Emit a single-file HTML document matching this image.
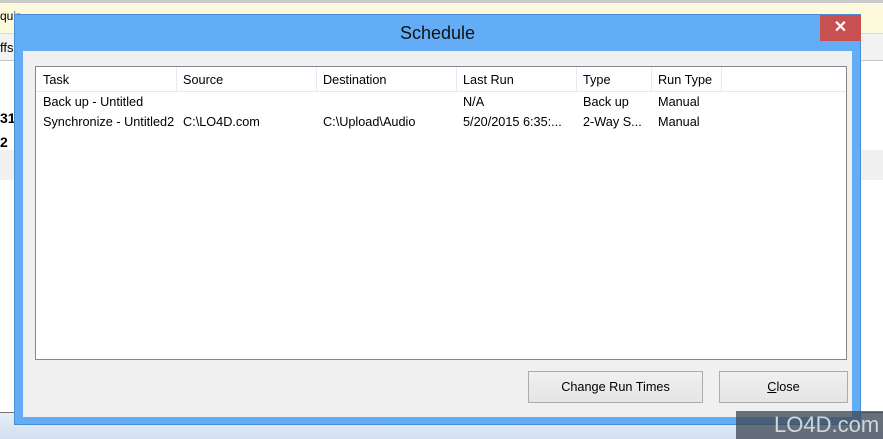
<!DOCTYPE html><html><head><style>
body{margin:0;width:883px;height:439px;position:relative;overflow:hidden;background:#fff;font-family:"Liberation Sans",sans-serif;font-size:12.7px;}
.a{position:absolute}
</style></head><body>
<div class="a" style="left:0;top:0;width:883px;height:3px;background:#c9c9c9"></div>
<div class="a" style="left:0;top:3px;width:883px;height:30px;background:#fdf9dc;border-bottom:1px solid #e3dcb0"></div>
<div class="a" style="left:0;top:9px;font-size:12px;color:#000">quir</div>
<div class="a" style="left:0;top:34px;width:883px;height:26px;background:#f2f2f2;border-bottom:1px solid #c8c8c8"></div>
<div class="a" style="left:0;top:40px;font-size:13px">ffs</div>
<div class="a" style="left:0;top:110px;font-weight:bold;font-size:14px">31</div>
<div class="a" style="left:0;top:134px;font-weight:bold;font-size:14px">2</div>
<div class="a" style="left:0;top:150px;width:883px;height:30px;background:#f0f0f0"></div>
<div class="a" style="left:0;top:412px;width:883px;height:1px;background:#777"></div>
<div class="a" style="left:0;top:413px;width:883px;height:26px;background:linear-gradient(#e6edf7,#d3e0f0)"></div>
<div class="a" style="left:14px;top:14px;width:847px;height:411px;background:#63adf7;border:1px solid #4a8ed6;box-sizing:border-box"></div>
<div class="a" style="left:14px;top:14px;width:847px;height:37px;text-align:center;line-height:39px;font-size:18px;color:#111">Schedule</div>
<div class="a" style="left:820px;top:15px;width:41px;height:26px;background:#c75050;color:#fff;text-align:center;line-height:26px;font-size:16px;font-weight:bold">✕</div>
<div class="a" style="left:23px;top:51px;width:829px;height:366px;background:#f0f0f0"></div>
<div class="a" style="left:35px;top:66px;width:812px;height:294px;background:#fff;border:1px solid #828790;box-sizing:border-box"></div>
<div class="a" style="left:36px;top:67px;width:810px;height:24px;border-bottom:1px solid #e5eaf0"></div>
<div class="a" style="left:176px;top:67px;width:1px;height:24px;background:#e5eaf0"></div>
<div class="a" style="left:316px;top:67px;width:1px;height:24px;background:#e5eaf0"></div>
<div class="a" style="left:456px;top:67px;width:1px;height:24px;background:#e5eaf0"></div>
<div class="a" style="left:576px;top:67px;width:1px;height:24px;background:#e5eaf0"></div>
<div class="a" style="left:651px;top:67px;width:1px;height:24px;background:#e5eaf0"></div>
<div class="a" style="left:721px;top:67px;width:1px;height:24px;background:#e5eaf0"></div>
<div class="a" style="top:73px;left:43px">Task</div><div class="a" style="top:73px;left:183px">Source</div><div class="a" style="top:73px;left:323px">Destination</div><div class="a" style="top:73px;left:463px">Last Run</div><div class="a" style="top:73px;left:583px">Type</div><div class="a" style="top:73px;left:658px">Run Type</div>
<div class="a" style="top:95px;left:43px">Back up - Untitled</div><div class="a" style="top:95px;left:463px">N/A</div><div class="a" style="top:95px;left:583px">Back up</div><div class="a" style="top:95px;left:658px">Manual</div>
<div class="a" style="top:115px;left:43px">Synchronize - Untitled2</div><div class="a" style="top:115px;left:183px">C:\LO4D.com</div><div class="a" style="top:115px;left:323px">C:\Upload\Audio</div><div class="a" style="top:115px;left:463px">5/20/2015 6:35:...</div><div class="a" style="top:115px;left:583px">2-Way S...</div><div class="a" style="top:115px;left:658px">Manual</div>
<div class="a" style="left:528px;top:371px;width:175px;height:32px;border:1px solid #acacac;box-sizing:border-box;background:linear-gradient(#f0f0f0,#e5e5e5);text-align:center;line-height:30px">Change Run Times</div>
<div class="a" style="left:719px;top:371px;width:129px;height:32px;border:1px solid #acacac;box-sizing:border-box;background:linear-gradient(#f0f0f0,#e5e5e5);text-align:center;line-height:30px"><u>C</u>lose</div>
<div class="a" style="left:736px;top:411px;width:147px;height:28px;background:rgba(60,70,80,0.75);color:#cfd6dc;font-size:22px;line-height:28px;padding-left:38px;box-sizing:border-box">LO4D.com</div>
</body></html>
